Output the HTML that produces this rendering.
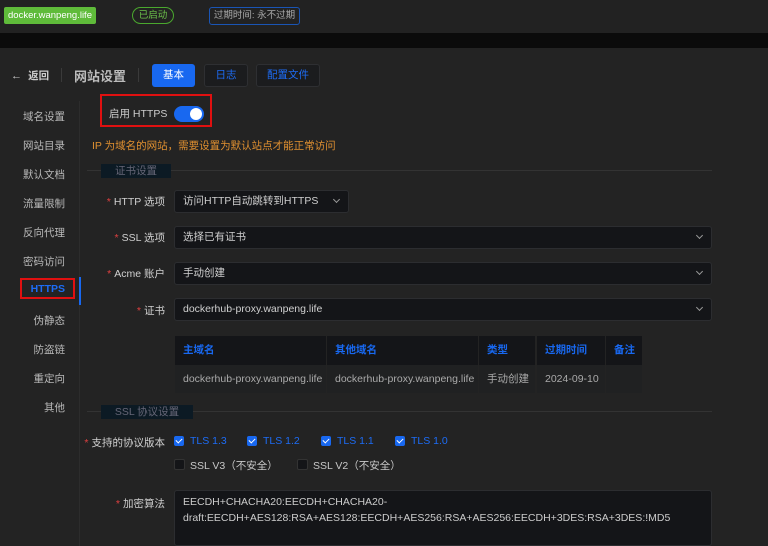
<!DOCTYPE html>
<html><head><meta charset="utf-8"><style>
*{margin:0;padding:0;box-sizing:border-box}
body{width:768px;height:546px;overflow:hidden;background:#232323;font-family:"Liberation Sans","Noto Sans CJK SC",sans-serif;font-size:10.5px;color:#c8c8c8;position:relative}
.a{position:absolute;white-space:nowrap}
.top{left:0;top:0;width:768px;height:33px;background:#222}
.strip{left:0;top:33px;width:768px;height:15px;background:#0b0b0b}
.inp{position:absolute;background:#141518;border:1px solid #2c2d30;border-radius:3px;height:23px;line-height:21px;padding-left:8px;color:#d0d0d0;font-size:10.5px;white-space:nowrap}
.chev{position:absolute;right:9px;top:6px;width:5px;height:5px;border-right:1px solid #999;border-bottom:1px solid #999;transform:rotate(45deg)}
.lbl{position:absolute;text-align:right;width:100px;left:65px;font-size:10.5px;color:#d0d0d0;white-space:nowrap}
.lbl b{color:#e04040;font-weight:normal;margin-right:3px}
.side{position:absolute;font-size:10.5px;color:#b8b8b8;text-align:right;width:50px;left:15px;white-space:nowrap}
.cb{position:absolute;width:10px;height:10px;border-radius:2px;background:#1868f0}
.cb::after{content:"";position:absolute;left:3px;top:1px;width:3px;height:5px;border-right:1.5px solid #fff;border-bottom:1.5px solid #fff;transform:rotate(45deg)}
.cbe{position:absolute;width:11px;height:11px;border-radius:2px;background:#141518;border:1px solid #333}
.blue{color:#1d6cf5}
.th{position:absolute;top:336px;height:29px;line-height:29px;background:#141518;color:#1868f0;font-weight:bold;padding-left:8px;white-space:nowrap}
.td{position:absolute;top:365px;height:28px;line-height:28px;background:#202122;color:#aaa;padding-left:8px;white-space:nowrap;overflow:hidden}
</style></head><body>
<div class="a top"></div>
<div class="a" style="left:4px;top:7px;width:92px;height:17px;background:#5fbb3a;border-radius:2px;color:#fff;line-height:17px;text-align:center;font-size:9.5px">docker.wanpeng.life</div>
<div class="a" style="left:132px;top:7px;width:42px;height:17px;border:1px solid #4aa82e;border-radius:9px;color:#6cc24a;line-height:15px;text-align:center;font-size:9.5px">已启动</div>
<div class="a" style="left:209px;top:7px;width:91px;height:18px;border:1px solid #1a55b5;border-radius:3px;color:#aaa;line-height:16px;text-align:center;font-size:9.5px">过期时间: 永不过期</div>
<div class="a strip"></div>

<div class="a" style="left:11px;top:68px;font-size:11px;color:#ccc">←&nbsp; <b style="font-size:10.5px">返回</b></div>
<div class="a" style="left:61px;top:68px;width:1px;height:14px;background:#3a3a3a"></div>
<div class="a" style="left:74px;top:66px;font-size:13px;font-weight:bold;color:#bbb">网站设置</div>
<div class="a" style="left:138px;top:68px;width:1px;height:14px;background:#3a3a3a"></div>
<div class="a" style="left:152px;top:64px;width:43px;height:23px;background:#1868f0;border-radius:3px;color:#fff;text-align:center;line-height:23px">基本</div>
<div class="a" style="left:204px;top:64px;width:44px;height:23px;background:#1b1c1e;border:1px solid #2e2f32;border-radius:3px;color:#1d6cf5;text-align:center;line-height:21px">日志</div>
<div class="a" style="left:256px;top:64px;width:64px;height:23px;background:#1b1c1e;border:1px solid #2e2f32;border-radius:3px;color:#1d6cf5;text-align:center;line-height:21px">配置文件</div>

<div class="a" style="left:79px;top:101px;width:1px;height:445px;background:#2c2c2c"></div>
<div class="a" style="left:79px;top:277px;width:2px;height:28px;background:#1868f0"></div>
<div class="side" style="top:109px">域名设置</div>
<div class="side" style="top:138px">网站目录</div>
<div class="side" style="top:167px">默认文档</div>
<div class="side" style="top:196px">流量限制</div>
<div class="side" style="top:225px">反向代理</div>
<div class="side" style="top:254px">密码访问</div>
<div class="a" style="left:20px;top:278px;width:55px;height:21px;border:2px solid #e01010"></div>
<div class="side blue" style="top:283px;font-weight:bold">HTTPS</div>
<div class="side" style="top:313px">伪静态</div>
<div class="side" style="top:342px">防盗链</div>
<div class="side" style="top:371px">重定向</div>
<div class="side" style="top:400px">其他</div>

<div class="a" style="left:100px;top:94px;width:112px;height:33px;border:2px solid #e01010"></div>
<div class="a" style="left:109px;top:106px;font-size:10.5px;color:#ccc">启用 HTTPS</div>
<div class="a" style="left:174px;top:106px;width:30px;height:16px;background:#1868f0;border-radius:8px"></div>
<div class="a" style="left:190px;top:108px;width:12px;height:12px;background:#fff;border-radius:6px"></div>
<div class="a" style="left:92px;top:138px;color:#e09030;font-size:10.5px">IP 为域名的网站，需要设置为默认站点才能正常访问</div>

<div class="a" style="left:87px;top:170px;width:625px;height:1px;background:#333"></div>
<div class="a" style="left:101px;top:164px;width:70px;height:14px;background:#0c1a24;color:#667;text-align:center;line-height:14px">证书设置</div>

<div class="lbl" style="top:194px"><b>*</b>HTTP 选项</div>
<div class="inp" style="left:174px;top:190px;width:175px">访问HTTP自动跳转到HTTPS<span class="chev"></span></div>
<div class="lbl" style="top:230px"><b>*</b>SSL 选项</div>
<div class="inp" style="left:174px;top:226px;width:538px">选择已有证书<span class="chev"></span></div>
<div class="lbl" style="top:266px"><b>*</b>Acme 账户</div>
<div class="inp" style="left:174px;top:262px;width:538px">手动创建<span class="chev"></span></div>
<div class="lbl" style="top:303px"><b>*</b>证书</div>
<div class="inp" style="left:174px;top:298px;width:538px">dockerhub-proxy.wanpeng.life<span class="chev"></span></div>

<div class="th" style="left:175px;width:151px">主域名</div>
<div class="th" style="left:327px;width:151px">其他域名</div>
<div class="th" style="left:479px;width:56px">类型</div>
<div class="th" style="left:537px;width:68px">过期时间</div>
<div class="th" style="left:606px;width:36px">备注</div>
<div class="td" style="left:175px;width:151px">dockerhub-proxy.wanpeng.life</div>
<div class="td" style="left:327px;width:151px">dockerhub-proxy.wanpeng.life</div>
<div class="td" style="left:479px;width:56px">手动创建</div>
<div class="td" style="left:537px;width:68px">2024-09-10</div>
<div class="td" style="left:606px;width:36px"></div>

<div class="a" style="left:87px;top:411px;width:625px;height:1px;background:#333"></div>
<div class="a" style="left:101px;top:405px;width:92px;height:14px;background:#0c1a24;color:#667;text-align:center;line-height:14px">SSL 协议设置</div>

<div class="lbl" style="top:435px"><b>*</b>支持的协议版本</div>
<div class="cb" style="left:174px;top:436px"></div><div class="a blue" style="left:190px;top:435px">TLS 1.3</div>
<div class="cb" style="left:247px;top:436px"></div><div class="a blue" style="left:263px;top:435px">TLS 1.2</div>
<div class="cb" style="left:321px;top:436px"></div><div class="a blue" style="left:337px;top:435px">TLS 1.1</div>
<div class="cb" style="left:395px;top:436px"></div><div class="a blue" style="left:411px;top:435px">TLS 1.0</div>
<div class="cbe" style="left:174px;top:459px"></div><div class="a" style="left:190px;top:458px">SSL V3（不安全）</div>
<div class="cbe" style="left:297px;top:459px"></div><div class="a" style="left:313px;top:458px">SSL V2（不安全）</div>

<div class="lbl" style="top:496px"><b>*</b>加密算法</div>
<div class="a" style="left:174px;top:490px;width:538px;height:56px;background:#141518;border:1px solid #2c2d30;border-radius:3px;padding:3px 8px;line-height:16px;color:#ccc">EECDH+CHACHA20:EECDH+CHACHA20-<br>draft:EECDH+AES128:RSA+AES128:EECDH+AES256:RSA+AES256:EECDH+3DES:RSA+3DES:!MD5</div>
</body></html>
